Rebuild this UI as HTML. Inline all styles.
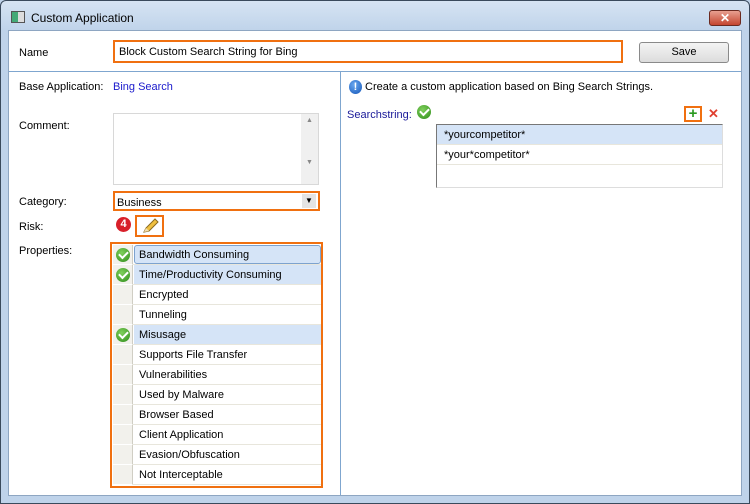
<!DOCTYPE html>
<html><head><style>
*{margin:0;padding:0;box-sizing:border-box}
body{width:750px;height:504px;overflow:hidden;background:#bfd3ea;font-family:"Liberation Sans",sans-serif;font-size:11px;color:#000;position:relative}
.a{position:absolute}
.win{left:0;top:0;width:750px;height:504px;border:1px solid #3a4a5c;border-radius:6px 6px 0 0;background:linear-gradient(#d6e4f3,#bfd3ea 30px);}
.body{left:8px;top:30px;width:734px;height:466px;background:#fff;border:1px solid #8ea6c2}
.lbl{font-size:11px}
.row{position:absolute;left:0;width:208px;height:20px;border-bottom:1px solid #e8e6dc}
.row .g{position:absolute;left:0;top:0;width:20px;height:20px;background:#f2f1ec;border-right:1px solid #d0cec4;border-bottom:1px solid #fff}
.row .t{position:absolute;left:26px;top:4px}
.sel{background:#d5e4f7}
.chk{position:absolute;left:3px;top:3px;width:14px;height:14px;border-radius:50%;background:radial-gradient(circle at 40% 35%,#7fd05c,#2e8c1a);}
.chk:after{content:"";position:absolute;left:3px;top:3px;width:7px;height:4px;border-left:2px solid #fff;border-bottom:2px solid #fff;transform:rotate(-45deg)}
</style></head><body>
<div class="a win"></div>
<div class="a" style="left:11px;top:11px;width:14px;height:12px;border:1px solid #555;background:linear-gradient(90deg,#4a7 0 50%,#ddd 50%)"></div>
<div class="a" style="left:31px;top:11px;font-size:12px">Custom Application</div>
<div class="a" style="left:709px;top:10px;width:32px;height:16px;border:1px solid #6b2a20;border-radius:3px;background:linear-gradient(#e8a090,#c4452f);color:#fff;font-weight:bold;text-align:center;font-size:12px;line-height:14px">✕</div>
<div class="a body"></div>
<div class="a lbl" style="left:19px;top:47px">Name</div>
<div class="a" style="left:113px;top:40px;width:510px;height:23px;border:2px solid #f07010;padding:4px 4px">Block Custom Search String for Bing</div>
<div class="a" style="left:639px;top:42px;width:90px;height:21px;border:1px solid #8a8a8a;border-radius:3px;background:linear-gradient(#f4f4f4,#dcdcdc);text-align:center;line-height:19px;font-size:11px">Save</div>
<div class="a" style="left:9px;top:71px;width:732px;height:1px;background:#7fa6cf"></div>
<div class="a" style="left:340px;top:72px;width:1px;height:423px;background:#7fa6cf"></div>
<div class="a lbl" style="left:19px;top:81px">Base Application:</div>
<div class="a lbl" style="left:113px;top:81px;color:#1a1acc">Bing Search</div>
<div class="a lbl" style="left:19px;top:120px">Comment:</div>
<div class="a" style="left:113px;top:113px;width:206px;height:72px;border:1px solid #d8d8d8"></div>
<div class="a" style="left:301px;top:114px;width:17px;height:70px;background:#f0f0f0;color:#888;font-size:7px;text-align:center;line-height:14px">▲<br><br><br>▼</div>
<div class="a lbl" style="left:19px;top:196px">Category:</div>
<div class="a" style="left:113px;top:191px;width:207px;height:20px;border:2px solid #f07010;padding:4px 2px">Business</div>
<div class="a" style="left:302px;top:194px;width:14px;height:14px;background:#e4e4e4;font-size:8px;text-align:center;line-height:14px">▼</div>
<div class="a lbl" style="left:19px;top:221px">Risk:</div>
<div class="a" style="left:116px;top:217px;width:15px;height:15px;border-radius:50%;background:#d8202a;color:#fff;font-weight:bold;font-size:11px;text-align:center;line-height:15px">4</div>
<div class="a" style="left:135px;top:215px;width:29px;height:22px;border:2px solid #f07010"><svg width="25" height="18" viewBox="0 0 25 18"><path d="M7 15 L9 11 L18 2 L21 5 L12 14 Z" fill="#f0c040" stroke="#8a6a20" stroke-width="1"/><path d="M7 15 L9 11 L12 14 Z" fill="#f4e0b0"/></svg></div>
<div class="a lbl" style="left:19px;top:245px">Properties:</div>
<div class="a" style="left:110px;top:242px;width:213px;height:246px;border:2px solid #f07010;background:#fff">
 <div style="position:relative;left:1px;top:1px">
  <div class="row" style="top:0"><div class="g"><div class="chk"></div></div><div class="a sel" style="left:21px;top:0;width:187px;height:19px;border:1px solid #7da2ce;border-radius:3px"></div><span class="t">Bandwidth Consuming</span></div>
  <div class="row" style="top:20px"><div class="g"><div class="chk"></div></div><div class="a sel" style="left:21px;top:0;width:187px;height:19px"></div><span class="t">Time/Productivity Consuming</span></div>
  <div class="row" style="top:40px"><div class="g"></div><span class="t">Encrypted</span></div>
  <div class="row" style="top:60px"><div class="g"></div><span class="t">Tunneling</span></div>
  <div class="row" style="top:80px"><div class="g"><div class="chk"></div></div><div class="a sel" style="left:21px;top:0;width:187px;height:19px"></div><span class="t">Misusage</span></div>
  <div class="row" style="top:100px"><div class="g"></div><span class="t">Supports File Transfer</span></div>
  <div class="row" style="top:120px"><div class="g"></div><span class="t">Vulnerabilities</span></div>
  <div class="row" style="top:140px"><div class="g"></div><span class="t">Used by Malware</span></div>
  <div class="row" style="top:160px"><div class="g"></div><span class="t">Browser Based</span></div>
  <div class="row" style="top:180px"><div class="g"></div><span class="t">Client Application</span></div>
  <div class="row" style="top:200px"><div class="g"></div><span class="t">Evasion/Obfuscation</span></div>
  <div class="row" style="top:220px"><div class="g"></div><span class="t">Not Interceptable</span></div>
 </div>
</div>
<div class="a" style="left:349px;top:80px;width:13px;height:14px;border-radius:50%;background:radial-gradient(circle at 40% 35%,#6aa8f0,#1456b8);color:#fff;font-weight:bold;font-size:11px;text-align:center;line-height:14px">!</div>
<div class="a lbl" style="left:365px;top:81px">Create a custom application based on Bing Search Strings.</div>
<div class="a lbl" style="left:347px;top:109px;color:#1a1a99">Searchstring:</div>
<div class="a" style="left:417px;top:105px;width:14px;height:14px;position:absolute"><div class="chk" style="left:0;top:0"></div></div>
<div class="a" style="left:684px;top:106px;width:18px;height:16px;border:2px solid #f07010;color:#2a9a20;font-weight:bold;font-size:15px;text-align:center;line-height:12px">+</div>
<div class="a" style="left:708px;top:106px;color:#e04030;font-weight:bold;font-size:13px">✕</div>
<div class="a" style="left:436px;top:124px;width:287px;height:64px;border:1px solid #777;border-right-color:#ddd;border-bottom-color:#ddd;background:#fff">
 <div style="height:20px;background:#d5e4f7;border-bottom:1px solid #e8e6dc;padding:4px 7px">*yourcompetitor*</div>
 <div style="height:20px;border-bottom:1px solid #e8e6dc;padding:4px 7px">*your*competitor*</div>
</div>
</body></html>
